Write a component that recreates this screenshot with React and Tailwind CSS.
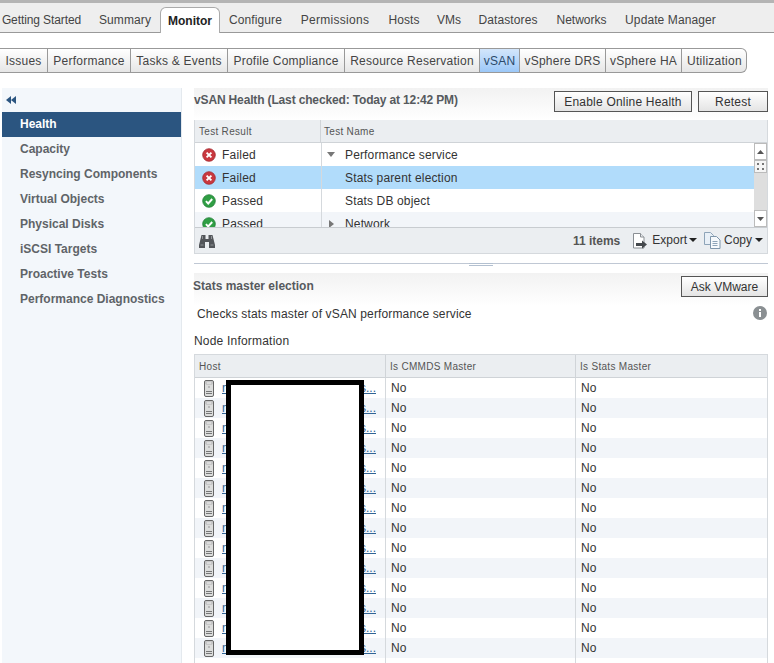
const TOP_TABS = [
  { label: "Getting Started", w: "w-[97px] tracking-[-0.1px]" },
  { label: "Summary", w: "w-[70px] tracking-[0.1px]" },
  { label: "Monitor", w: "w-[60px]" },
  { label: "Configure", w: "w-[71px] tracking-[0.1px]" },
  { label: "Permissions", w: "w-[88px] tracking-[0.3px]" },
  { label: "Hosts", w: "w-[50px] tracking-[0.1px]" },
  { label: "VMs", w: "w-[40px]" },
  { label: "Datastores", w: "w-[78px] tracking-[0.1px]" },
  { label: "Networks", w: "w-[69px]" },
  { label: "Update Manager", w: "w-[109px] tracking-[0.1px]" },
];
const SUB_TABS = [
  { label: "Issues", w: "w-[48px]" },
  { label: "Performance", w: "w-[83px]" },
  { label: "Tasks & Events", w: "w-[97px]" },
  { label: "Profile Compliance", w: "w-[117px]" },
  { label: "Resource Reservation", w: "w-[135px]" },
  { label: "vSAN", w: "w-[40px]" },
  { label: "vSphere DRS", w: "w-[86px]" },
  { label: "vSphere HA", w: "w-[76px]" },
  { label: "Utilization", w: "w-[65px]" },
];
const SIDE = ["Health", "Capacity", "Resyncing Components", "Virtual Objects", "Physical Disks", "iSCSI Targets", "Proactive Tests", "Performance Diagnostics"];
const TESTS = [
  { result: "Failed", name: "Performance service", caret: "down" },
  { result: "Failed", name: "Stats parent election", selected: true },
  { result: "Passed", name: "Stats DB object" },
  { result: "Passed", name: "Network", caret: "right", alt: true },
];

function StatusIcon({ failed }) {
  return (
    <svg width="14" height="14" viewBox="0 0 14 14" className="shrink-0">
      <circle cx="7" cy="7" r="6.3" fill={failed ? "#c9383f" : "#2f9e44"} stroke={failed ? "#a32a30" : "#26813a"} strokeWidth="0.8" />
      {failed ? (
        <path d="M4.6 4.6 9.4 9.4M9.4 4.6 4.6 9.4" stroke="#fff" strokeWidth="1.9" />
      ) : (
        <path d="M3.9 7.2 6.2 9.5 10.2 5" stroke="#fff" strokeWidth="1.9" fill="none" />
      )}
    </svg>
  );
}

function Binoculars() {
  return (
    <svg width="16" height="14" viewBox="0 0 16 14">
      <path d="M2.500 1h4v4h3V1h4l2.500 10v3h-6V8h-4v6H0v-3z" fill="#53565a" />
      <path d="M3.500 2v3M12.500 2v3M1.500 11h3M11.500 11h3" stroke="#8f9396" strokeWidth="1" />
    </svg>
  );
}

function ExportIcon() {
  return (
    <svg width="16" height="16" viewBox="0 0 16 16">
      <path d="M1.500.5h7l3.500 3.500v11h-10.500z" fill="#fff" stroke="#8a8f94" />
      <path d="M8.500.5v3.500h3.500" fill="#e8ebee" stroke="#8a8f94" />
      <path d="M4 10h6V7.500l5 4-5 4V13H4z" fill="#45494d" />
    </svg>
  );
}

function CopyIcon() {
  return (
    <svg width="17" height="17" viewBox="0 0 17 17">
      <path d="M.5.5h6l3 3v9h-9z" fill="#e9f0f7" stroke="#8ea4b8" />
      <path d="M6.500 4.500h6l3.500 3.500v8.500h-9.500z" fill="#f6f9fc" stroke="#7f96ab" />
      <path d="M8.500 9.500h5M8.500 11.500h5M8.500 13.500h5" stroke="#8ea4b8" />
    </svg>
  );
}

function HostIcon() {
  return (
    <svg width="10" height="17" viewBox="0 0 10 17" className="shrink-0">
      <rect x="0.500" y="0.500" width="9" height="16" rx="1.500" fill="#dcdddc" stroke="#666" />
      <rect x="2" y="2" width="6" height="2" fill="#f7f7f7" stroke="#888" strokeWidth="0.500" />
      <rect x="4.500" y="6.500" width="1" height="1" fill="#555" />
      <path d="M2 11.500h6M2 13.500h6" stroke="#777" />
    </svg>
  );
}

function Caret() {
  return (
    <svg width="8" height="4" viewBox="0 0 8 4">
      <path d="M0 0h8L4 4z" fill="#222" />
    </svg>
  );
}

function Button({ children, className }) {
  return (
    <button className={`h-[21px] border border-[#555] bg-gradient-to-b from-white to-[#e4e4e4] text-[12px] text-[#333] ${className}`}>
      {children}
    </button>
  );
}

export default function App() {
  return (
    <div className="w-[774px] h-[663px] overflow-hidden bg-white text-[12px] text-[#333] font-['Liberation_Sans',Arial,sans-serif]">
      {/* Object tabs */}
      <div className="h-[33px] border-t-[3px] border-[#b4b4b4] border-b border-b-[#999] bg-[#eeeeee] flex items-end">
        <div className="flex items-end -ml-[7px] h-[26px]">
          {TOP_TABS.map((t) =>
            t.label === "Monitor" ? (
              <div key={t.label} className={`${t.w} h-[26px] -mb-px bg-white border border-b-0 border-[#aaa] rounded-t-md font-bold text-[#222] flex items-center justify-center`}>
                {t.label}
              </div>
            ) : (
              <div key={t.label} className={`${t.w} h-[25px] flex items-center justify-center text-[#444]`}>
                {t.label}
              </div>
            )
          )}
        </div>
      </div>

      {/* Monitor sub tabs */}
      <div className="mt-[15px] flex h-[25px] w-[747px] border border-l-0 border-[#999] rounded-r-md bg-gradient-to-b from-white to-[#e6e6e6] overflow-hidden">
        {SUB_TABS.map((t) => (
          <div
            key={t.label}
            className={`${t.w} shrink-0 flex items-center justify-center border-r last:border-r-0 border-[#999] tracking-[0.25px] ${t.label === "vSAN" ? "bg-gradient-to-b from-[#d3e6fb] to-[#9cc8f8] text-[#2b4a6b]" : "text-[#444]"}`}
          >
            {t.label}
          </div>
        ))}
      </div>

      <div className="mt-[15px] flex">
        {/* Left rail */}
        <aside className="ml-[2px] w-[180px] h-[575px] shrink-0 bg-[#f3f7fb] border-r border-[#e4e9ee]">
          <div className="h-[24px] pl-[3px] flex items-center">
            <svg width="11" height="8" viewBox="0 0 11 8" className="ml-[1px]">
              <path d="M5 0v8L0 4zM10 0v8L5 4z" fill="#2b5580" />
            </svg>
          </div>
          {SIDE.map((s, i) => (
            <div key={s} className={`h-[25px] pl-[18px] pb-[1px] flex items-center font-bold text-[12px] ${i === 0 ? "bg-[#2b5580] text-white" : "text-[#5f6468]"}`}>
              {s}
            </div>
          ))}
        </aside>

        <main className="ml-[12px] w-[574px] shrink-0">
          {/* Health summary */}
          <div className="h-[32px] flex items-start justify-between bg-gradient-to-b from-[#f2f2f2] to-white">
            <div className="font-bold text-[12px] tracking-[-0.15px] text-[#565a5e] pt-[3px]">vSAN Health (Last checked: Today at 12:42 PM)</div>
            <div className="flex gap-[6px] mt-[3px]">
              <Button className="w-[138px] tracking-[0.2px]">Enable Online Health</Button>
              <Button className="w-[70px] tracking-[0.2px]">Retest</Button>
            </div>
          </div>

          <div className="border border-[#d5d9dd]">
            <div className="h-[23px] -mt-px flex bg-[#ebeef1] border-b border-[#cfd3d7] text-[10px] tracking-[0.3px] text-[#555]">
              <div className="w-[126px] pl-[4px] pt-[1px] flex items-center border-r border-[#d0d4d8]">Test Result</div>
              <div className="pl-[3px] pt-[1px] flex items-center">Test Name</div>
            </div>
            <div className="flex h-[84px] overflow-hidden">
              <div className="flex-1 min-w-0">
                {TESTS.map((r) => (
                  <div key={r.result + r.name} className={`h-[23px] flex shrink-0 ${r.selected ? "bg-[#b1dcfb]" : r.alt ? "bg-[#f2f5f9]" : "bg-white"}`}>
                    <div className="w-[127px] pl-[7px] flex items-center gap-[6px] border-r border-[#d5d9dd] tracking-[0.2px]">
                      <StatusIcon failed={r.result === "Failed"} />
                      {r.result}
                    </div>
                    <div className="flex items-center pl-[5px] tracking-[0.15px]">
                      <span className="w-[18px] flex">
                        {r.caret === "down" && (
                          <svg width="8" height="5" viewBox="0 0 8 5"><path d="M0 0h8L4 5z" fill="#777" /></svg>
                        )}
                        {r.caret === "right" && (
                          <svg width="5" height="8" viewBox="0 0 5 8" className="ml-[2px]"><path d="M0 0l5 4-5 4z" fill="#777" /></svg>
                        )}
                      </span>
                      {r.name}
                    </div>
                  </div>
                ))}
              </div>
              {/* Scroll bar */}
              <div className="w-[13px] shrink-0 bg-[#dedede] flex flex-col justify-between">
                <div>
                  <div className="h-[17px] bg-white border border-[#bbb] flex items-center justify-center">
                    <svg width="7" height="4" viewBox="0 0 7 4"><path d="M3.500 0 7 4H0z" fill="#555" /></svg>
                  </div>
                  <div className="h-[13px] bg-[#f5f5f5] border border-[#bbb] flex items-center justify-center">
                    <svg width="7" height="7" viewBox="0 0 7 7"><path d="M0 0h2v2H0zM5 0h2v2H5zM0 5h2v2H0zM5 5h2v2H5z" fill="#777" /></svg>
                  </div>
                </div>
                <div className="h-[17px] bg-white border border-[#bbb] flex items-center justify-center">
                  <svg width="7" height="4" viewBox="0 0 7 4"><path d="M0 0h7L3.500 4z" fill="#555" /></svg>
                </div>
              </div>
            </div>
            <div className="h-[26px] bg-[#ebeef1] border-t border-[#c8ccd0] flex items-center pl-[4px] pr-[4px]">
              <Binoculars />
              <span className="ml-auto font-bold text-[#555]">11 items</span>
              <span className="ml-[12px]"><ExportIcon /></span>
              <span className="ml-[4px] -mt-[2px]">Export</span>
              <span className="ml-[2px] -mt-[1px]"><Caret /></span>
              <span className="ml-[7px]"><CopyIcon /></span>
              <span className="ml-[3px] -mt-[2px]">Copy</span>
              <span className="ml-[3px] -mt-[1px]"><Caret /></span>
            </div>
          </div>

          {/* Splitter */}
          <div className="mt-[9px] h-[6px] border-t border-[#c0c8d4] flex justify-center">
            <div className="w-[24px] h-[3px] -mt-[1px] border-y border-[#b3c0d0]" />
          </div>

          {/* Detail panel */}
          <div className="mt-[4px] h-[33px] flex items-start justify-between bg-gradient-to-b from-[#f2f2f2] to-white">
            <div className="font-bold text-[12px] text-[#565a5e] -ml-px pt-[4px]">Stats master election</div>
            <Button className="w-[87px] mt-[3px]">Ask VMware</Button>
          </div>
          <div className="flex items-center justify-between h-[16px]">
            <div className="ml-[3px] tracking-[0.14px]">Checks stats master of vSAN performance service</div>
            <svg width="14" height="14" viewBox="0 0 14 14" className="mr-[1px] -mt-[2px]">
              <circle cx="7" cy="7" r="7" fill="#8a8f92" />
              <path d="M6 3h2v2H6zM6 6h2v5H6z" fill="#fff" />
            </svg>
          </div>
          <div className="mt-[12px] h-[14px] leading-[14px] tracking-[0.2px]">Node Information</div>

          <div className="relative mt-[6px] border border-[#d5d9dd] border-b-0 h-[312px] overflow-hidden">
            <div className="h-[23px] flex bg-[#ebeef1] border-b border-[#cfd3d7] text-[10px] tracking-[0.3px] text-[#555]">
              <div className="w-[191px] pl-[4px] pt-[1px] flex items-center border-r border-[#d0d4d8]">Host</div>
              <div className="w-[190px] pl-[4px] pt-[1px] flex items-center border-r border-[#d0d4d8]">Is CMMDS Master</div>
              <div className="pl-[4px] pt-[1px] flex items-center">Is Stats Master</div>
            </div>
            {Array.from({ length: 14 }, (_, i) => (
              <div key={i} className={`h-[20px] flex ${i % 2 ? "bg-[#f2f5f9]" : "bg-white"}`}>
                <div className="w-[191px] pl-[9px] flex items-center border-r border-[#d5d9dd]">
                  <HostIcon />
                  <span className="ml-[8px] w-[154px] flex justify-between text-[#2f6496] underline">
                    <span>n</span>
                    <span>s...</span>
                  </span>
                </div>
                <div className="w-[190px] pl-[5px] flex items-center border-r border-[#d5d9dd]">No</div>
                <div className="pl-[5px] flex items-center">No</div>
              </div>
            ))}
            <div className="h-[20px] flex">
              <div className="w-[191px] border-r border-[#d5d9dd]" />
              <div className="w-[190px] border-r border-[#d5d9dd]" />
            </div>
            {/* Redaction box drawn over the host names */}
            <div className="absolute left-[31px] top-[25px] w-[138px] h-[275px] bg-white border-[5px] border-black" />
          </div>
        </main>
      </div>
    </div>
  );
}
